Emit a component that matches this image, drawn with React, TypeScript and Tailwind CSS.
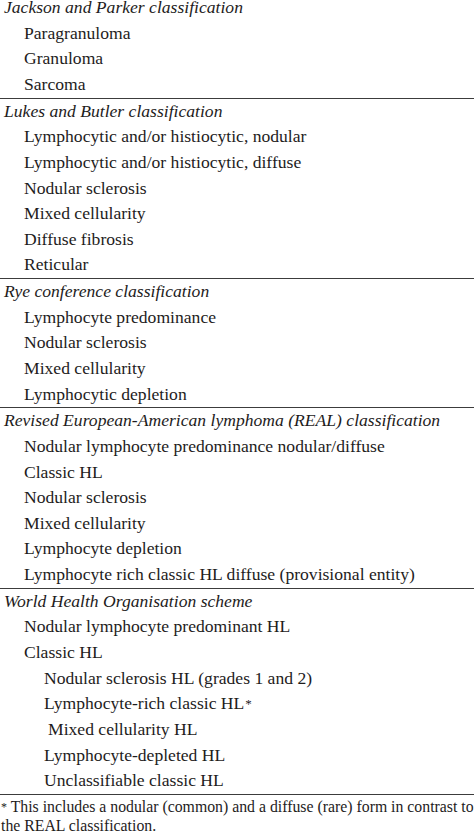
import React from 'react';

type Row = { text: string; level: 0 | 1 | 2; note?: boolean; extra?: boolean };

const groups: Row[][] = [
  [
    { text: 'Jackson and Parker classification', level: 0 },
    { text: 'Paragranuloma', level: 1 },
    { text: 'Granuloma', level: 1 },
    { text: 'Sarcoma', level: 1 },
  ],
  [
    { text: 'Lukes and Butler classification', level: 0 },
    { text: 'Lymphocytic and/or histiocytic, nodular', level: 1 },
    { text: 'Lymphocytic and/or histiocytic, diffuse', level: 1 },
    { text: 'Nodular sclerosis', level: 1 },
    { text: 'Mixed cellularity', level: 1 },
    { text: 'Diffuse fibrosis', level: 1 },
    { text: 'Reticular', level: 1 },
  ],
  [
    { text: 'Rye conference classification', level: 0 },
    { text: 'Lymphocyte predominance', level: 1 },
    { text: 'Nodular sclerosis', level: 1 },
    { text: 'Mixed cellularity', level: 1 },
    { text: 'Lymphocytic depletion', level: 1 },
  ],
  [
    { text: 'Revised European-American lymphoma (REAL) classification', level: 0 },
    { text: 'Nodular lymphocyte predominance nodular/diffuse', level: 1 },
    { text: 'Classic HL', level: 1 },
    { text: 'Nodular sclerosis', level: 1 },
    { text: 'Mixed cellularity', level: 1 },
    { text: 'Lymphocyte depletion', level: 1 },
    { text: 'Lymphocyte rich classic HL diffuse (provisional entity)', level: 1 },
  ],
  [
    { text: 'World Health Organisation scheme', level: 0 },
    { text: 'Nodular lymphocyte predominant HL', level: 1 },
    { text: 'Classic HL', level: 1 },
    { text: 'Nodular sclerosis HL (grades 1 and 2)', level: 2 },
    { text: 'Lymphocyte-rich classic HL', level: 2, note: true },
    { text: 'Mixed cellularity HL', level: 2, extra: true },
    { text: 'Lymphocyte-depleted HL', level: 2 },
    { text: 'Unclassifiable classic HL', level: 2 },
  ],
];

function TableRow({ row }: { row: Row }) {
  const pad = row.level === 0 ? 'pl-[4px] italic' : row.level === 1 ? 'pl-[24px]' : row.extra ? 'pl-[48px]' : 'pl-[44px]';
  return (
    <div className={`h-[25.65px] flex items-center whitespace-nowrap ${pad}`}>
      <span>
        {row.text}
        {row.note && <sup className="text-[13px] relative top-[-1px] ml-[1px]">*</sup>}
      </span>
    </div>
  );
}

export default function App() {
  return (
    <div
      className="w-[474px] h-[835px] overflow-hidden bg-white text-[#1e1c1c] text-[17.6px] leading-none"
      style={{ fontFamily: '"Liberation Serif", "Times New Roman", serif' }}
    >
      <div className="mt-[-5px]">
        {groups.map((g, gi) => (
          <div key={gi} className="border-b-[1.5px] border-[#3c3c3c]">
            {g.map((r, ri) => (
              <TableRow key={ri} row={r} />
            ))}
          </div>
        ))}
        <div className="text-[15.8px] leading-[19px] whitespace-nowrap pt-[2px] pl-[1px]">
          <div>
            <sup className="text-[12px] relative top-[-1px]">*</sup> This includes a nodular (common) and a diffuse (rare) form in contrast to
          </div>
          <div>the REAL classification.</div>
        </div>
      </div>
    </div>
  );
}
